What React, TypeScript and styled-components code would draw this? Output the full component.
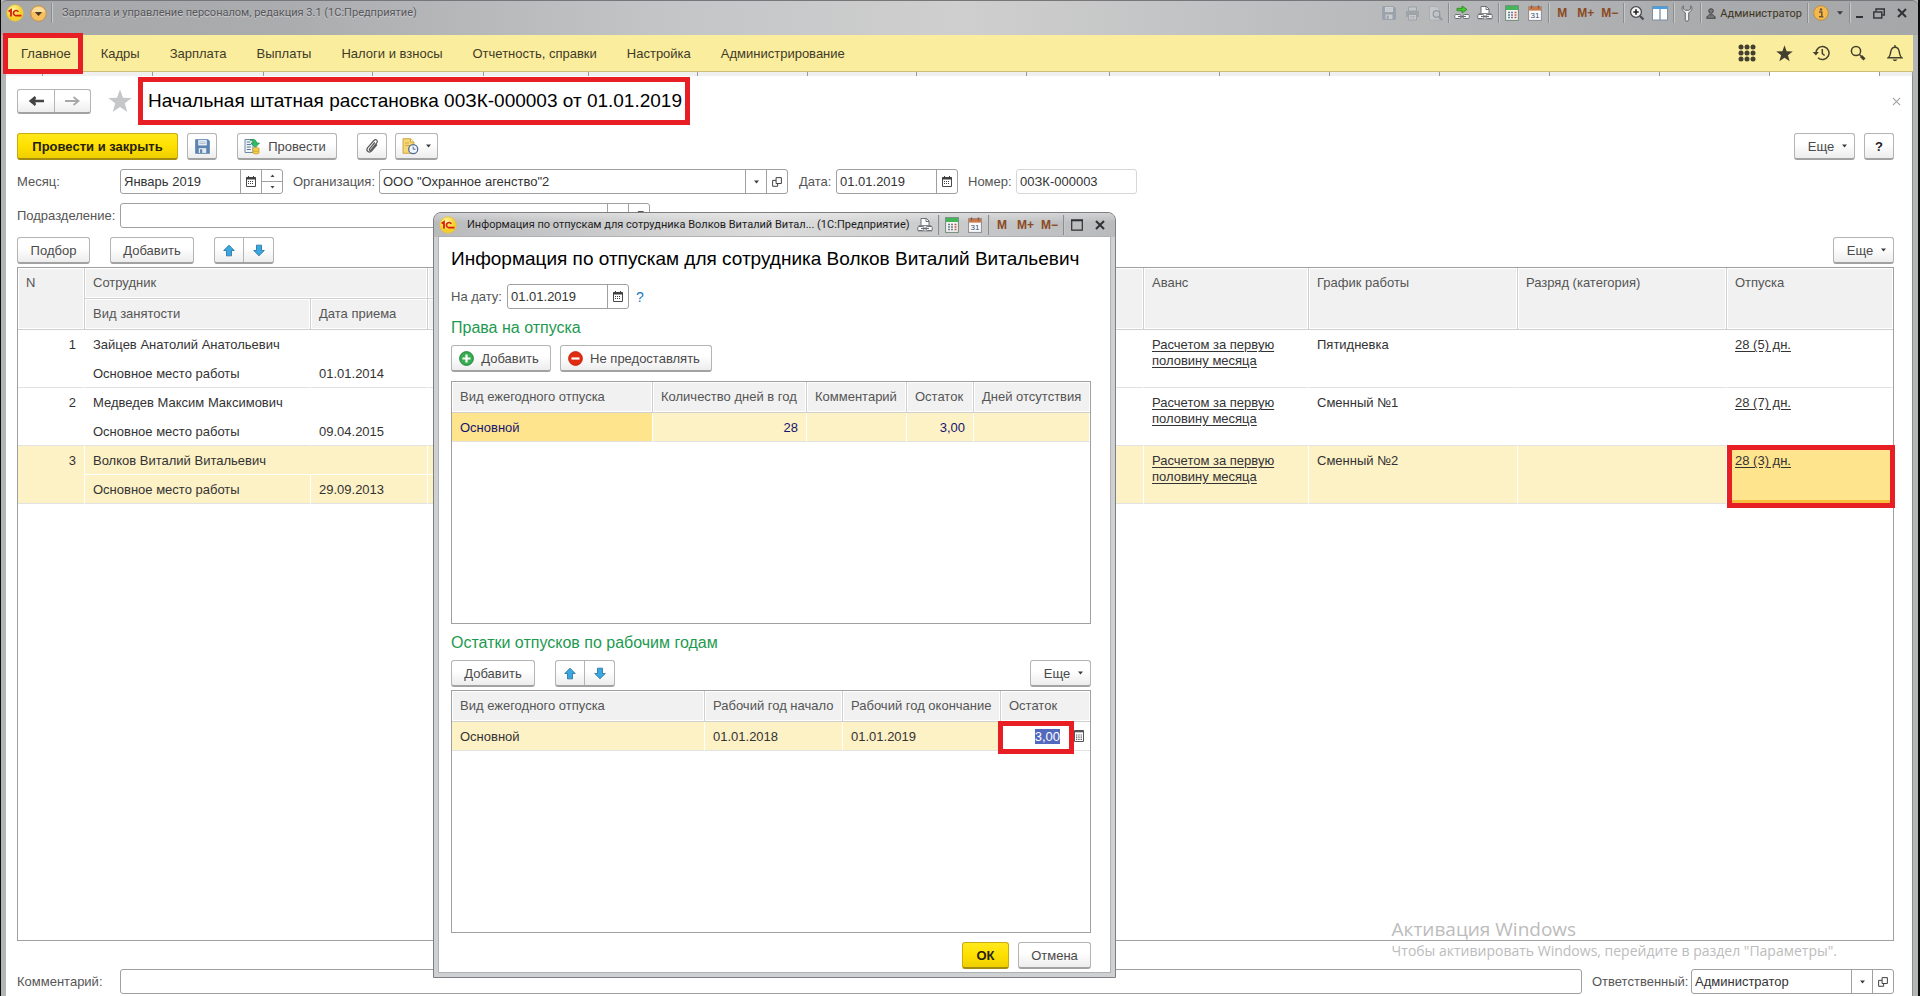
import React, { useEffect, useRef } from "react";
import styled, { createGlobalStyle, css } from "styled-components";

const RED = "#e81e25";
const LINE = "#a0a0a0";

const GlobalStyle = createGlobalStyle`
  *, *::before, *::after { box-sizing: border-box; }
  body { margin: 0; background: #000; }
  body, button, input { font-family: "Liberation Sans", Arial, sans-serif; font-size: 13px; color: #333; }
  h1, h2, h3, p { margin: 0; font-weight: normal; }
  button { cursor: pointer; }
`;

/* ---------- window frame ---------- */

const Frame = styled.div`
  position: relative;
  display: flex;
  flex-direction: column;
  min-height: 100vh;
  padding: 0 5px;
  background: #b4b5b7;
  border: solid #0c0c0c;
  border-width: 0 2px 0 1px;
`;

const TitleBar = styled.header`
  display: flex;
  align-items: flex-start;
  height: 35px;
  margin: 0 -5px;
  padding: 1px 8px 0 5px;
  border-top: 1px solid #77777b;
  border-radius: 6px 6px 0 0;
  background: linear-gradient(90deg, #a6a7a9 0%, #abacae 15%, #c4c5c7 35%, #cfcfcf 50%, #bcbdbf 68%, #a9aaac 90%, #a6a7a9 100%);
`;

const BarGroup = styled.div<{ $gap: number }>`
  display: flex;
  align-items: center;
  gap: ${(p) => p.$gap}px;
  height: 22px;
`;

const Separator = styled.span`
  width: 1px;
  height: 20px;
  margin: 0 -2px;
  background: #8c8d90;
  box-shadow: 1px 0 0 #c6c7c9;
`;

const WindowTitle = styled.span<{ $strong?: boolean }>`
  flex: 1;
  margin-left: ${(p) => (p.$strong ? 10 : 12)}px;
  font-family: Roboto, "Liberation Sans", sans-serif;
  font-size: 11px;
  line-height: 22px;
  white-space: pre;
  color: ${(p) => (p.$strong ? "#1c1c1c" : "#55565a")};
  text-shadow: 0 1px 1px #d4d4d6;
`;

const BarButton = styled.button<{ $faded?: boolean; $narrow?: boolean }>`
  display: flex;
  align-items: center;
  justify-content: center;
  gap: 4px;
  min-width: ${(p) => (p.$narrow ? 8 : 16)}px;
  height: 20px;
  padding: 0;
  border: 0;
  background: none;
  font-family: Roboto, "Liberation Sans", sans-serif;
  font-size: 11px;
  white-space: nowrap;
  color: #3c3420;
  opacity: ${(p) => (p.$faded ? 0.4 : 1)};
`;

const Memory = styled(BarButton)`
  font-family: "Liberation Sans", Arial, sans-serif;
  font-size: 12px;
  font-weight: bold;
  color: #8a4a22;
`;

/* ---------- section menu ---------- */

const MenuBar = styled.nav`
  display: flex;
  align-items: center;
  justify-content: space-between;
  height: 37px;
  padding: 0 7px 0 15px;
  background: #fbed9e;
  border-bottom: 1px solid #c9bd78;
`;

const MenuItems = styled.div`
  display: flex;
  gap: 30px;
`;

const MenuLink = styled.a<{ $marked?: boolean }>`
  line-height: 15px;
  color: #3f3b28;
  text-decoration: none;
  ${(p) =>
    p.$marked &&
    css`
      position: relative;
      &::after {
        content: "";
        position: absolute;
        inset: -13px -12px -13px -18px;
        border: 5px solid ${RED};
        pointer-events: none;
      }
    `}
`;

const MenuTools = styled.div`
  display: flex;
  gap: 15px;
`;

const ToolButton = styled.button`
  display: flex;
  align-items: center;
  justify-content: center;
  width: 22px;
  height: 22px;
  padding: 0;
  border: 0;
  background: none;
  color: #44402f;
`;

const TabStrip = styled.div`
  display: flex;
  height: 4px;
  background: #f0f0f0;
`;

const Tab = styled.span<{ $size: number; $active?: boolean }>`
  flex: ${(p) => p.$size} 1 0;
  border-right: 1px solid #9a9a9a;
  background: ${(p) => (p.$active ? "#fff" : "#f0f0f0")};
`;

/* ---------- form ---------- */

const Page = styled.main`
  flex: 1;
  display: flex;
  flex-direction: column;
  padding: 1px 18px 2px 11px;
  background: #fff;
  border-right: 1px solid #8c8c8c;
`;

const Row = styled.div<{ $top?: number; $gap?: number }>`
  display: flex;
  align-items: center;
  gap: ${(p) => p.$gap ?? 0}px;
  margin-top: ${(p) => p.$top ?? 9}px;
`;

const Spacer = styled.span`
  flex: 1;
`;

const PageTitle = styled.h1`
  height: 48px;
  margin-left: 6px;
  padding: 0 3px 0 5px;
  border: 5px solid ${RED};
  font-size: 19px;
  line-height: 38px;
  color: #000;
  white-space: nowrap;
`;

const StarToggle = styled(ToolButton)`
  width: 24px;
  margin-left: 17px;
  color: #c6c7c9;
`;

const CloseTab = styled(ToolButton)`
  margin-right: -13px;
  color: #a8a8a8;
`;

const Button = styled.button<{ $w?: number; $primary?: boolean; $left?: number; $bold?: boolean; $icon?: boolean; $more?: boolean }>`
  display: inline-flex;
  align-items: center;
  justify-content: center;
  gap: ${(p) => (p.$more ? 8 : 7)}px;
  width: ${(p) => (p.$w ? p.$w + "px" : "auto")};
  height: 27px;
  margin-left: ${(p) => p.$left ?? 0}px;
  padding: ${(p) => (p.$icon ? "0 4px 0 0" : p.$more ? "0 0 0 6px" : "0")};
  border: 1px solid #b4b4b4;
  border-bottom: 2px solid #a2a2a2;
  border-radius: 3px;
  background: linear-gradient(#fff 40%, #ededed);
  color: #4a4a4a;
  white-space: nowrap;
  ${(p) =>
    p.$bold &&
    css`
      font-weight: bold;
      color: #222;
    `}
  ${(p) =>
    p.$primary &&
    css`
      font-weight: bold;
      color: #26220a;
      border-color: #c8ac12;
      border-bottom-color: #a38c10;
      background: linear-gradient(#ffe81c, #ffe000 50%, #efcf00);
    `}
`;

const Pair = styled.span<{ $h: number; $left?: number }>`
  display: inline-flex;
  height: ${(p) => p.$h}px;
  margin-left: ${(p) => p.$left ?? 0}px;
  border: 1px solid #b4b4b4;
  border-bottom: 2px solid #a2a2a2;
  border-radius: 3px;
  background: linear-gradient(#fff 40%, #ededed);
`;

const PairButton = styled.button<{ $w: number }>`
  display: flex;
  align-items: center;
  justify-content: center;
  width: ${(p) => p.$w}px;
  padding: 0;
  border: 0;
  background: none;
  & + & {
    border-left: 1px solid #b4b4b4;
  }
`;

const Label = styled.label<{ $w?: number; $left?: number }>`
  flex: none;
  width: ${(p) => (p.$w ? p.$w + "px" : "auto")};
  margin-left: ${(p) => p.$left ?? 0}px;
  color: #555;
  white-space: nowrap;
`;

const Field = styled.span<{ $w?: number; $light?: boolean }>`
  display: flex;
  flex: ${(p) => (p.$w ? "none" : "1")};
  width: ${(p) => (p.$w ? p.$w + "px" : "auto")};
  height: 25px;
  border: 1px solid ${(p) => (p.$light ? "#d6d6d6" : LINE)};
  border-radius: 3px;
  background: #fff;
`;

const Input = styled.input`
  flex: 1;
  min-width: 0;
  padding: 0 0 0 3px;
  border: 0;
  outline: 0;
  background: none;
  color: #333;
`;

const FieldButton = styled.button`
  display: flex;
  align-items: center;
  justify-content: center;
  width: 21px;
  padding: 0;
  border: 0;
  border-left: 1px solid ${LINE};
  background: none;
  color: #444;
`;

const Stepper = styled.span`
  display: flex;
  flex-direction: column;
  width: 21px;
  border-left: 1px solid ${LINE};
`;

const StepButton = styled.button`
  display: flex;
  flex: 1;
  align-items: center;
  justify-content: center;
  padding: 0;
  border: 0;
  background: none;
  color: #444;
  & + & {
    border-top: 1px solid ${LINE};
  }
`;

/* ---------- tables ---------- */

const GridBox = styled.div<{ $top: number; $h?: number }>`
  flex: ${(p) => (p.$h ? "none" : "1")};
  height: ${(p) => (p.$h ? p.$h + "px" : "auto")};
  margin-top: ${(p) => p.$top}px;
  border: 1px solid ${LINE};
  background: #fff;
`;

const Grid = styled.table`
  width: 100%;
  table-layout: fixed;
  border-collapse: separate;
  border-spacing: 0;
`;

const Col = styled.col<{ $w?: number }>`
  width: ${(p) => (p.$w ? p.$w + "px" : "auto")};
`;

const Th = styled.th`
  height: 31px;
  padding: 7px 8px;
  border: solid #cfcfcf;
  border-width: 0 1px 1px 0;
  background: #f1f1f1;
  box-shadow: inset 0 0 0 1px #fff;
  font-weight: normal;
  line-height: 15px;
  text-align: left;
  vertical-align: top;
  white-space: nowrap;
  color: #555;
  &:last-child {
    border-right: 0;
  }
`;

const tone = { plain: "#fff", selected: "#fdf1c6", current: "#ffe48e" };

const Td = styled.td<{ $tone?: keyof typeof tone; $right?: boolean; $ink?: string; $line?: boolean; $mark?: boolean }>`
  height: 29px;
  padding: 7px 8px 5px;
  border: solid transparent;
  border-width: 0 1px 1px 0;
  border-right-color: #fff;
  border-bottom-color: ${(p) => (p.$line ? "#e2e2e2" : "#fff")};
  background: ${(p) => tone[p.$tone ?? "plain"]};
  line-height: 16px;
  text-align: ${(p) => (p.$right ? "right" : "left")};
  vertical-align: top;
  color: ${(p) => p.$ink ?? "#333"};
  ${(p) =>
    p.$mark &&
    css`
      position: relative;
      box-shadow: inset 0 -3px 0 #f7bd3a;
      &::after {
        content: "";
        position: absolute;
        inset: -1px -3px -5px 0;
        border: 5px solid ${RED};
        pointer-events: none;
      }
    `}
`;

const CellLink = styled.a`
  color: inherit;
  text-underline-offset: 2px;
  white-space: pre-line;
`;

const EditCell = styled.td`
  position: relative;
  padding: 0;
  background: #fff;
  border-bottom: 1px solid #e2e2e2;
  &::after {
    content: "";
    position: absolute;
    inset: -1px 16px -4px -3px;
    border: 5px solid ${RED};
    pointer-events: none;
  }
`;

const EditRow = styled.span`
  display: flex;
  align-items: center;
  height: 28px;
`;

const EditInput = styled.input`
  width: 59px;
  padding: 0;
  border: 0;
  outline: 0;
  background: none;
  text-align: right;
  &::selection {
    background: #5269bd;
    color: #fff;
  }
`;

const EditButton = styled(ToolButton)`
  width: 12px;
  margin-left: 13px;
`;

/* ---------- dialog ---------- */

const Dialog = styled.section`
  position: absolute;
  left: 432px;
  top: 212px;
  width: 683px;
  padding: 0 5px 5px;
  border: 1px solid #7e7f82;
  border-radius: 8px 8px 0 0;
  background: #cfd0d1;
`;

const DialogBar = styled.header`
  display: flex;
  align-items: center;
  height: 24px;
  margin: 0 -5px;
  padding: 0 7px 0 5px;
  border-radius: 7px 7px 0 0;
  background: linear-gradient(rgba(255, 255, 255, 0.35), rgba(255, 255, 255, 0) 40%),
    linear-gradient(90deg, #b9babc, #dcdcdc 50%, #b9babc);
`;

const DialogBody = styled.div`
  padding: 11px 19px 3px 12px;
  background: #fff;
  box-shadow: 0 0 0 1px #b0b1b3;
`;

const DialogTitle = styled.h2`
  font-size: 19px;
  line-height: 22px;
  color: #000;
  white-space: nowrap;
`;

const SectionTitle = styled.h3`
  margin-top: 9px;
  font-size: 16px;
  line-height: 20px;
  color: #1d9a50;
`;

const Hint = styled.a`
  margin-left: 7px;
  font-size: 14px;
  color: #1a7ab8;
  text-decoration: none;
`;

/* ---------- desktop watermark ---------- */

const Watermark = styled.aside`
  position: absolute;
  right: 81px;
  bottom: 34px;
  font-family: "Open Sans", "Noto Sans", sans-serif;
  font-size: 14px;
  line-height: 22px;
  color: #bcbcbc;
  white-space: nowrap;
  pointer-events: none;
`;

const WatermarkTitle = styled.p`
  font-size: 19px;
`;

/* ---------- icons ---------- */

const Logo = () => (
  <svg width="18" height="18" viewBox="0 0 18 18">
    <defs>
      <radialGradient id="logo" cx="40%" cy="30%">
        <stop offset="0" stopColor="#fff7a0" />
        <stop offset="1" stopColor="#f6cf2c" />
      </radialGradient>
    </defs>
    <circle cx="9" cy="9" r="8.3" fill="url(#logo)" stroke="#e3bd3a" strokeWidth=".6" />
    <path d="M2.600 7.600 5 6v6.600" fill="none" stroke="#d8200f" strokeWidth="1.800" />
    <path d="M12.300 7.800a2.600 2.600 0 1 0-2.500 3.900h5.700" fill="none" stroke="#d8200f" strokeWidth="1.700" />
  </svg>
);

const Orb = () => (
  <svg width="17" height="17" viewBox="0 0 17 17">
    <circle cx="8.500" cy="8.500" r="7.800" fill="#f6bf60" stroke="#b98a45" strokeWidth=".8" />
    <path d="M2 7a6.600 6.200 0 0 1 13 0z" fill="#fbdc9c" />
    <path d="M4.800 7h7.400l-3.700 4z" fill="#4c3820" />
  </svg>
);

const Floppy = ({ size = 14, tone: c = "#6d7f95", paper = "#c5ccd4" }) => (
  <svg width={size} height={size} viewBox="0 0 14 14">
    <path d="M.7.700h11.300L13.300 2v11.300H.7z" fill={c} stroke={c} />
    <path d="M3 1h8v5H3z" fill="#eef3f8" />
    <path d="M4 2.700h6M4 4.300h6" stroke={paper} strokeWidth=".8" />
    <path d="M3.500 8.500h7V13h-7z" fill="#e3e9ef" />
    <path d="M4.700 9.600h2V13h-2z" fill={c} />
  </svg>
);

const Printer = () => (
  <svg width="15" height="15" viewBox="0 0 15 15">
    <path d="M3.500 1h8v4h-8z" fill="#d5dade" stroke="#74808c" />
    <path d="M1 5h13v6H1z" fill="#7c8894" />
    <path d="M3.500 8.500h8v5.500h-8z" fill="#dfe3e6" stroke="#74808c" />
    <path d="M5 10.500h5M5 12h5" stroke="#9aa4ad" strokeWidth=".8" />
  </svg>
);

const Preview = () => (
  <svg width="15" height="15" viewBox="0 0 15 15">
    <path d="M1.500.500h7l3 3v10.500h-10z" fill="#dce0e4" stroke="#9aa3ac" />
    <circle cx="8.500" cy="8" r="3.300" fill="#cfd6dc" stroke="#5f6e7c" strokeWidth="1.300" />
    <path d="M11 10.500 14.200 14" stroke="#5f6e7c" strokeWidth="2" />
  </svg>
);

const Chain = () => (
  <g fill="#fff" stroke="#6b6e73" strokeWidth="1">
    <rect x=".8" y="9.500" width="6" height="4" rx="1" />
    <rect x="9.200" y="9.500" width="6" height="4" rx="1" />
    <path d="M4 11.500h8" strokeWidth="1.200" />
  </g>
);

const LinkArrow = () => (
  <svg width="16" height="16" viewBox="0 0 16 16">
    <Chain />
    <path d="M3 3.300h5V1l5 3.500-5 3.500V5.700H3z" fill="#49c931" stroke="#24801a" strokeWidth=".8" />
  </svg>
);

const LinkPage = () => (
  <svg width="16" height="16" viewBox="0 0 16 16">
    <path d="M4 9V1.500h5.500L12 4v5" fill="#fff" stroke="#6b6e73" />
    <path d="M9 1.500V4.500h3" fill="none" stroke="#6b6e73" />
    <path d="M2 8.500h12l1 5.500H1z" fill="#f1f2f3" stroke="#85888c" />
    <Chain />
  </svg>
);

const Calculator = () => (
  <svg width="14" height="16" viewBox="0 0 14 16">
    <rect x=".6" y=".6" width="12.800" height="14.800" fill="#f3f3f3" stroke="#6f8a78" />
    <rect x="1" y="1" width="12" height="4" fill="#46b458" />
    <path d="M3 7.500h2M6 7.500h2M3 10h2M6 10h2M3 12.500h2M6 12.500h2" stroke="#6c7f90" strokeWidth="1.400" />
    <path d="M9.500 7.500h2M9.500 10h2M9.500 12.500h2" stroke="#c25a4a" strokeWidth="1.400" />
  </svg>
);

const Calendar31 = () => (
  <svg width="14" height="16" viewBox="0 0 14 16">
    <rect x=".6" y="1.600" width="12.800" height="13.800" fill="#fbfbfb" stroke="#8b8b90" />
    <rect x="1" y="2" width="12" height="3.600" fill="#c9794a" />
    <path d="M3.500.500v3M10.500.500v3" stroke="#a0552c" strokeWidth="1.400" />
    <text x="7" y="13" textAnchor="middle" fontFamily="Liberation Sans" fontSize="8" fill="#334e6c">31</text>
  </svg>
);

const ZoomIn = () => (
  <svg width="16" height="16" viewBox="0 0 16 16">
    <circle cx="7" cy="7" r="5.400" fill="#f5f5f5" stroke="#4a4b4e" strokeWidth="1.300" />
    <path d="M4.300 7h5.400M7 4.300v5.400" stroke="#222" strokeWidth="1.600" />
    <path d="m11 11 3.500 3.500" stroke="#4a4b4e" strokeWidth="2.200" />
  </svg>
);

const Panels = () => (
  <svg width="16" height="15" viewBox="0 0 16 15">
    <path d="M.5.500h15v13.500H.5z" fill="#fff" stroke="#7a8ea3" />
    <path d="M.5.500h15v2.500H.5z" fill="#4c9ede" />
    <path d="M8 3v11" stroke="#7a8ea3" strokeWidth="1.300" />
  </svg>
);

const Wrench = () => (
  <svg width="12" height="17" viewBox="0 0 12 17">
    <path
      d="M2.300.800C.6 2 .5 5.500 3.300 6.800L4.300 8v6.500a1.700 1.700 0 0 0 3.400 0V8l1-1.200C11.500 5.500 11.400 2 9.700.800V4L7.800 5.300H4.200L2.300 4z"
      fill="#f3f3f3"
      stroke="#58595c"
      strokeWidth=".9"
    />
  </svg>
);

const Person = () => (
  <svg width="10" height="11" viewBox="0 0 10 11">
    <circle cx="5" cy="3" r="2.300" fill="#77787a" stroke="#3d3d3d" strokeWidth=".9" />
    <path d="M.7 10.300c0-2 1.500-3 2.800-3.600h3c1.300.6 2.800 1.600 2.800 3.600z" fill="#77787a" stroke="#3d3d3d" strokeWidth=".9" />
  </svg>
);

const Info = () => (
  <svg width="16" height="16" viewBox="0 0 16 16">
    <circle cx="8" cy="8" r="7.300" fill="#f5b94c" stroke="#b98e48" />
    <circle cx="8" cy="4.500" r="1.300" fill="#6b5838" />
    <path d="M6 7h2.800v4.500M6 11.800h4.300" fill="none" stroke="#6b5838" strokeWidth="1.500" />
  </svg>
);

const Caret = ({ w = 5 }) => (
  <svg width={w} height="4" viewBox="0 0 6 4">
    <path d="M0 .3h6L3 3.800z" fill="#3c3c3c" />
  </svg>
);

const Minimize = () => (
  <svg width="9" height="12" viewBox="0 0 9 12">
    <path d="M1 10h7" stroke="#303134" strokeWidth="2" />
  </svg>
);

const Restore = () => (
  <svg width="12" height="11" viewBox="0 0 12 11">
    <path d="M3 3.500V1h8.300v6H9.300" fill="none" stroke="#303134" strokeWidth="1.400" />
    <rect x=".8" y="4" width="8" height="6" fill="none" stroke="#303134" strokeWidth="1.400" />
  </svg>
);

const Maximize = () => (
  <svg width="12" height="12" viewBox="0 0 12 12">
    <path d="M.7 1.300h10.600v9.900H.7z" fill="none" stroke="#303134" strokeWidth="1.200" />
    <path d="M0 1.300h12" stroke="#303134" strokeWidth="2" />
  </svg>
);

const Cross = ({ size = 10, color = "#303134", weight = 2 }) => (
  <svg width={size} height={size} viewBox="0 0 10 10">
    <path d="m1 1 8 8M9 1 1 9" stroke={color} strokeWidth={weight} />
  </svg>
);

const Dots = () => (
  <svg width="18" height="18" viewBox="0 0 18 18" fill="currentColor">
    {[3, 9, 15].map((y) => [3, 9, 15].map((x) => <circle key={`${x}${y}`} cx={x} cy={y} r="2.500" />))}
  </svg>
);

const Star = ({ size = 17 }) => (
  <svg width={size} height={size} viewBox="0 0 24 24" fill="currentColor">
    <path d="m12 .5 3 8.200 8.700.3-6.900 5.300 2.500 8.700L12 18l-7.300 5 2.500-8.700L.3 9l8.700-.3z" />
  </svg>
);

const History = () => (
  <svg width="18" height="16" viewBox="0 0 18 16" fill="none" stroke="currentColor" strokeWidth="1.500">
    <path d="M4 8a6.500 6.500 0 1 1 2 4.700" />
    <path d="M10.300 4v4.500l2.300 2" />
    <path d="M.7 7h6.200L3.900 10.500z" fill="currentColor" stroke="none" />
  </svg>
);

const Search = () => (
  <svg width="16" height="16" viewBox="0 0 16 16" fill="none" stroke="currentColor">
    <circle cx="6" cy="6" r="4.600" strokeWidth="1.500" />
    <path d="m9.500 9.500 1.500 1.500" strokeWidth="1.500" />
    <path d="m11 11 3.500 3.500" strokeWidth="3" />
  </svg>
);

const Bell = () => (
  <svg width="16" height="18" viewBox="0 0 16 18" fill="none" stroke="currentColor" strokeWidth="1.400">
    <path d="M1.200 13.700c2-1.500 2-3.200 2.500-5.700C4.200 5 5.500 3.300 8 3.300S11.800 5 12.300 8c.5 2.500.5 4.200 2.500 5.700z" />
    <path d="M8 3.300V1" />
    <path d="M5.500 15.500h5L9 17H7z" fill="currentColor" stroke="none" />
  </svg>
);

const Arrow = ({ flip = false, color = "#444" }) => (
  <svg width="15" height="12" viewBox="0 0 15 12">
    <path
      d={flip ? "M0 6h13M8.500 2 13.500 6 8.500 10" : "M15 6H4M6.500 2 1.500 6l5 4"}
      fill={color}
      stroke={color}
      strokeWidth={flip ? 1.800 : 2.300}
      fillOpacity={flip ? 0 : 1}
    />
  </svg>
);

const BlueArrow = ({ down = false }) => (
  <svg width="12" height="13" viewBox="0 0 13 13">
    <path
      d={down ? "M6.500 12.300.8 6.500h3V.7h5.400v5.800h3z" : "M6.500.7.800 6.500h3v5.800h5.400V6.500h3z"}
      fill="#3aa8e0"
      stroke="#2a6f9e"
      strokeWidth=".9"
    />
  </svg>
);

const PostDoc = () => (
  <svg width="17" height="17" viewBox="0 0 17 17">
    <path d="M1 1.500h8v13H1z" fill="#eef3f8" stroke="#6e8aa3" />
    <path d="M2.800 4h3.500M2.800 6.500h4.500M2.800 9h4M2.800 11.500h4" stroke="#557b9c" />
    <path d="M6 2c4-1.500 6.500 0 6.500 3h3l-4.200 4.500L7 5h2.500c0-1.500-1.500-2.500-3.500-3z" fill="#2fc06a" stroke="#168544" strokeWidth=".7" />
    <path d="M9 10.500c0-1.300 6-1.300 6 0v4.500c0 1.300-6 1.300-6 0z" fill="#f2cf4a" stroke="#c79a22" strokeWidth=".7" />
    <path d="M9 12.700c1 1 5 1 6 0" fill="none" stroke="#c79a22" strokeWidth=".7" />
  </svg>
);

const Clip = () => (
  <svg width="14" height="16" viewBox="0 0 14 16" fill="none" stroke="#58595b" strokeWidth="1.200">
    <path d="M9.800 4.500 4.600 10.800c-.9 1.200.6 2.300 1.500 1.200l5.700-7c1.700-2.300-1-4.600-2.900-2.500L2.500 9.800c-2 2.800 1.600 6 4.200 3.100L12 6.500" />
  </svg>
);

const DocClock = () => (
  <svg width="17" height="17" viewBox="0 0 17 17">
    <path d="M1 .7h7.500L12 4v11.300H1z" fill="#f6d573" stroke="#c9a23c" strokeWidth=".9" />
    <path d="M8.500.700V4H12" fill="#fff2c0" stroke="#c9a23c" strokeWidth=".9" />
    <path d="M3 5h4M3 7.500h5" stroke="#d0ab4e" />
    <circle cx="11.200" cy="11.200" r="4.500" fill="#f2f6fb" stroke="#4f6a94" strokeWidth="1.300" />
    <path d="M11.200 8.500v2.700h2.300" fill="none" stroke="#4f6a94" />
  </svg>
);

const DayPicker = () => (
  <svg width="10" height="11" viewBox="0 0 10 11">
    <path d="M.5 1.500h9v9h-9z" fill="none" stroke="#4a4a4a" />
    <path d="M0 2.500h10" stroke="#3f3f3f" strokeWidth="2" />
    <path d="M2.500 0v2M7.500 0v2" stroke="#3f3f3f" />
    <path d="M2 5.500h6M2 7.500h6" stroke="#3f3f3f" strokeDasharray="1 1" />
  </svg>
);

const OpenRef = () => (
  <svg width="10" height="10" viewBox="0 0 11 11" fill="none" stroke="#3f3f3f" strokeWidth="1.100">
    <path d="M4.500.700h5.800v6.500H4.500z" />
    <path d="M4.500 3.700H.7v6.500h5.500V7.500" />
  </svg>
);

const MiniCalc = () => (
  <svg width="10" height="12" viewBox="0 0 10 12">
    <path d="M.5.500h9v11h-9z" fill="#fff" stroke="#555" />
    <path d="M0 1.500h10" stroke="#555" strokeWidth="1.600" />
    <path d="M2 5h6M2 7.200h6M2 9.400h6" stroke="#555" strokeWidth="1.200" strokeDasharray="1.300 1" />
  </svg>
);

const StepMark = ({ up = false }) => (
  <svg width="5" height="3" viewBox="0 0 5 3">
    <path d={up ? "M.5 3h4L2.500.5z" : "M.5 0h4L2.500 2.500z"} fill="#444" />
  </svg>
);

const Disc = ({ kind }: { kind: "plus" | "minus" }) => (
  <svg width="15" height="15" viewBox="0 0 15 15">
    <circle cx="7.500" cy="7.500" r="6.900" fill={kind === "plus" ? "#38ac50" : "#df2b10"} stroke={kind === "plus" ? "#20803a" : "#c8240c"} strokeWidth=".9" />
    <path d={kind === "plus" ? "M3.500 7.500h8M7.500 3.500v8" : "M3.500 7.500h8"} stroke="#fff" strokeWidth="2.200" />
  </svg>
);

/* ---------- data ---------- */

const sections = ["Главное", "Кадры", "Зарплата", "Выплаты", "Налоги и взносы", "Отчетность, справки", "Настройка", "Администрирование"];
const tabs = [36, 111, 111, 109, 111, 105, 109, 110, 110, 110, 83, 110, 110, 110, 110, 110, 110, 111, 32];
const employees = [
  { n: 1, name: "Зайцев Анатолий Анатольевич", date: "01.01.2014", plan: "Пятидневка", leave: "28 (5) дн." },
  { n: 2, name: "Медведев Максим Максимович", date: "09.04.2015", plan: "Сменный №1", leave: "28 (7) дн." },
  { n: 3, name: "Волков Виталий Витальевич", date: "29.09.2013", plan: "Сменный №2", leave: "28 (3) дн." },
];

const MoreButton = () => (
  <Button type="button" $w={61} $more>
    Еще
    <Caret />
  </Button>
);

const MovePair = ({ left }: { left: number }) => (
  <Pair $h={27} $left={left}>
    <PairButton type="button" $w={28} aria-label="Вверх"><BlueArrow /></PairButton>
    <PairButton type="button" $w={30} aria-label="Вниз"><BlueArrow down /></PairButton>
  </Pair>
);

const EmployeeTable = () => (
  <GridBox $top={3}>
    <Grid>
      <colgroup>
        {[67, 226, 117, 272, 0, 165, 209, 209, 166].map((w, i) => <Col key={i} $w={w || undefined} />)}
      </colgroup>
      <thead>
        <tr>
          <Th rowSpan={2}>N</Th>
          <Th colSpan={2}>Сотрудник</Th>
          <Th />
          <Th rowSpan={2} />
          <Th rowSpan={2}>Аванс</Th>
          <Th rowSpan={2}>График работы</Th>
          <Th rowSpan={2}>Разряд (категория)</Th>
          <Th rowSpan={2}>Отпуска</Th>
        </tr>
        <tr>
          <Th>Вид занятости</Th>
          <Th>Дата приема</Th>
          <Th />
        </tr>
      </thead>
      <tbody>
        {employees.map((e) => {
          const t = e.n === 3 ? "selected" : "plain";
          return (
            <React.Fragment key={e.n}>
              <tr>
                <Td rowSpan={2} $tone={t} $line $right>{e.n}</Td>
                <Td colSpan={2} $tone={t}>{e.name}</Td>
                <Td $tone={t} />
                <Td rowSpan={2} $tone={t} $line />
                <Td rowSpan={2} $tone={t} $line><CellLink href="#advance">{"Расчетом за первую \nполовину месяца"}</CellLink></Td>
                <Td rowSpan={2} $tone={t} $line>{e.plan}</Td>
                <Td rowSpan={2} $tone={t} $line />
                <Td rowSpan={2} $tone={e.n === 3 ? "current" : t} $line $mark={e.n === 3}><CellLink href="#leave">{e.leave}</CellLink></Td>
              </tr>
              <tr>
                <Td $tone={t} $line>Основное место работы</Td>
                <Td $tone={t} $line>{e.date}</Td>
                <Td $tone={t} $line />
              </tr>
            </React.Fragment>
          );
        })}
      </tbody>
    </Grid>
  </GridBox>
);

const LeaveDialog = () => {
  const balance = useRef<HTMLInputElement>(null);
  useEffect(() => {
    balance.current?.focus();
    balance.current?.select();
  }, []);
  return (
    <Dialog role="dialog" aria-labelledby="leave-title">
      <DialogBar>
        <Logo />
        <WindowTitle $strong>{"Информация по отпускам для сотрудника Волков Виталий Витал... (1С:Предприятие)"}</WindowTitle>
        <BarGroup $gap={7}>
          <BarButton aria-label="Ссылка"><LinkPage /></BarButton>
          <Separator />
          <BarButton aria-label="Калькулятор"><Calculator /></BarButton>
          <BarButton aria-label="Календарь"><Calendar31 /></BarButton>
          <Separator />
          <Memory>M</Memory>
          <Memory>M+</Memory>
          <Memory>M−</Memory>
          <Separator />
          <BarButton aria-label="Развернуть"><Maximize /></BarButton>
          <BarButton aria-label="Закрыть"><Cross /></BarButton>
        </BarGroup>
      </DialogBar>
      <DialogBody>
        <DialogTitle id="leave-title">Информация по отпускам для сотрудника Волков Виталий Витальевич</DialogTitle>
        <Row $top={14}>
          <Label htmlFor="on-date" $w={56}>На дату:</Label>
          <Field $w={122}>
            <Input id="on-date" defaultValue="01.01.2019" />
            <FieldButton type="button" aria-label="Выбрать дату"><DayPicker /></FieldButton>
          </Field>
          <Hint href="#help">?</Hint>
        </Row>
        <SectionTitle>Права на отпуска</SectionTitle>
        <Row $top={7} $gap={9}>
          <Button type="button" $w={100} $icon><Disc kind="plus" />Добавить</Button>
          <Button type="button" $w={152} $icon><Disc kind="minus" />Не предоставлять</Button>
        </Row>
        <GridBox $top={9} $h={243}>
          <Grid>
            <colgroup>
              {[201, 154, 100, 67, 0].map((w, i) => <Col key={i} $w={w || undefined} />)}
            </colgroup>
            <thead>
              <tr>
                <Th>Вид ежегодного отпуска</Th>
                <Th>Количество дней в год</Th>
                <Th>Комментарий</Th>
                <Th>Остаток</Th>
                <Th>Дней отсутствия</Th>
              </tr>
            </thead>
            <tbody>
              <tr>
                <Td $tone="current" $ink="#15156e" $line>Основной</Td>
                <Td $tone="selected" $ink="#15156e" $line $right>28</Td>
                <Td $tone="selected" $line />
                <Td $tone="selected" $ink="#15156e" $line $right>3,00</Td>
                <Td $tone="selected" $line />
              </tr>
            </tbody>
          </Grid>
        </GridBox>
        <SectionTitle>Остатки отпусков по рабочим годам</SectionTitle>
        <Row $top={7}>
          <Button type="button" $w={84}>Добавить</Button>
          <MovePair left={20} />
          <Spacer />
          <MoreButton />
        </Row>
        <GridBox $top={3} $h={243}>
          <Grid>
            <colgroup>
              {[253, 138, 158, 0].map((w, i) => <Col key={i} $w={w || undefined} />)}
            </colgroup>
            <thead>
              <tr>
                <Th>Вид ежегодного отпуска</Th>
                <Th>Рабочий год начало</Th>
                <Th>Рабочий год окончание</Th>
                <Th>Остаток</Th>
              </tr>
            </thead>
            <tbody>
              <tr>
                <Td $tone="selected" $line>Основной</Td>
                <Td $tone="selected" $line>01.01.2018</Td>
                <Td $tone="selected" $line>01.01.2019</Td>
                <EditCell>
                  <EditRow>
                    <EditInput ref={balance} aria-label="Остаток" defaultValue="3,00" />
                    <EditButton type="button" aria-label="Калькулятор"><MiniCalc /></EditButton>
                  </EditRow>
                </EditCell>
              </tr>
            </tbody>
          </Grid>
        </GridBox>
        <Row $gap={9}>
          <Spacer />
          <Button type="button" $w={47} $primary>ОК</Button>
          <Button type="button" $w={73}>Отмена</Button>
        </Row>
      </DialogBody>
    </Dialog>
  );
};

export default function App() {
  return (
    <>
      <GlobalStyle />
      <Frame>
        <TitleBar>
          <BarGroup $gap={6}>
            <Logo />
            <BarButton aria-label="Меню"><Orb /></BarButton>
            <Separator />
          </BarGroup>
          <WindowTitle>{"Зарплата и управление персоналом, редакция 3.1 (1С:Предприятие)"}</WindowTitle>
          <BarGroup $gap={7}>
            <BarButton $faded aria-label="Сохранить"><Floppy /></BarButton>
            <BarButton $faded aria-label="Печать"><Printer /></BarButton>
            <BarButton $faded aria-label="Просмотр"><Preview /></BarButton>
            <Separator />
            <BarButton aria-label="Перейти по ссылке"><LinkArrow /></BarButton>
            <BarButton aria-label="Ссылка"><LinkPage /></BarButton>
            <Separator />
            <BarButton aria-label="Калькулятор"><Calculator /></BarButton>
            <BarButton aria-label="Календарь"><Calendar31 /></BarButton>
            <Separator />
            <Memory>M</Memory>
            <Memory>M+</Memory>
            <Memory>M−</Memory>
            <Separator />
            <BarButton aria-label="Масштаб"><ZoomIn /></BarButton>
            <BarButton aria-label="Панели"><Panels /></BarButton>
            <Separator />
            <BarButton aria-label="Настройки"><Wrench /></BarButton>
            <Separator />
            <BarButton><Person />Администратор</BarButton>
            <Separator />
            <BarButton aria-label="Справка"><Info /></BarButton>
            <BarButton $narrow aria-label="Еще"><Caret w={8} /></BarButton>
            <Separator />
            <BarButton $narrow aria-label="Свернуть"><Minimize /></BarButton>
            <BarButton aria-label="Восстановить"><Restore /></BarButton>
            <BarButton aria-label="Закрыть"><Cross /></BarButton>
          </BarGroup>
        </TitleBar>
        <MenuBar>
          <MenuItems>
            {sections.map((s, i) => <MenuLink key={s} href="#section" $marked={i === 0}>{s}</MenuLink>)}
          </MenuItems>
          <MenuTools>
            <ToolButton aria-label="Функции"><Dots /></ToolButton>
            <ToolButton aria-label="Избранное"><Star /></ToolButton>
            <ToolButton aria-label="История"><History /></ToolButton>
            <ToolButton aria-label="Поиск"><Search /></ToolButton>
            <ToolButton aria-label="Оповещения"><Bell /></ToolButton>
          </MenuTools>
        </MenuBar>
        <TabStrip>
          {tabs.map((w, i) => <Tab key={i} $size={w} $active={i === 17} />)}
        </TabStrip>
        <Page>
          <Row $top={0}>
            <Pair $h={25}>
              <PairButton type="button" $w={36} aria-label="Назад"><Arrow /></PairButton>
              <PairButton type="button" $w={36} aria-label="Вперед"><Arrow flip color="#a8a8a8" /></PairButton>
            </Pair>
            <StarToggle aria-label="В избранное"><Star size={24} /></StarToggle>
            <PageTitle>Начальная штатная расстановка 00ЗК-000003 от 01.01.2019</PageTitle>
            <Spacer />
            <CloseTab aria-label="Закрыть"><Cross size={9} color="#a0a0a0" weight={1.2} /></CloseTab>
          </Row>
          <Row $top={8}>
            <Button type="button" $w={161} $primary>Провести и закрыть</Button>
            <Button type="button" $w={30} $left={9} aria-label="Записать"><Floppy size={15} tone="#5b84b0" paper="#9db4ca" /></Button>
            <Button type="button" $w={100} $left={20} $icon><PostDoc />Провести</Button>
            <Button type="button" $w={30} $left={20} aria-label="Файлы"><Clip /></Button>
            <Button type="button" $w={43} $left={8} aria-label="Создать на основании"><DocClock /><Caret /></Button>
            <Spacer />
            <MoreButton />
            <Button type="button" $w={30} $left={9} $bold>?</Button>
          </Row>
          <Row>
            <Label htmlFor="month" $w={103}>Месяц:</Label>
            <Field $w={163}>
              <Input id="month" defaultValue="Январь 2019" />
              <FieldButton type="button" aria-label="Выбрать месяц"><DayPicker /></FieldButton>
              <Stepper>
                <StepButton type="button" aria-label="Больше"><StepMark up /></StepButton>
                <StepButton type="button" aria-label="Меньше"><StepMark /></StepButton>
              </Stepper>
            </Field>
            <Label htmlFor="org" $w={86} $left={10}>Организация:</Label>
            <Field $w={409}>
              <Input id="org" defaultValue={'ООО "Охранное агенство"2'} />
              <FieldButton type="button" aria-label="Выбрать"><Caret /></FieldButton>
              <FieldButton type="button" aria-label="Открыть"><OpenRef /></FieldButton>
            </Field>
            <Label htmlFor="date" $w={37} $left={11}>Дата:</Label>
            <Field $w={122}>
              <Input id="date" defaultValue="01.01.2019" />
              <FieldButton type="button" aria-label="Выбрать дату"><DayPicker /></FieldButton>
            </Field>
            <Label htmlFor="number" $w={48} $left={10}>Номер:</Label>
            <Field $w={121} $light>
              <Input id="number" defaultValue="00ЗК-000003" />
            </Field>
          </Row>
          <Row>
            <Label htmlFor="dept" $w={103}>Подразделение:</Label>
            <Field $w={530}>
              <Input id="dept" />
              <FieldButton type="button" aria-label="Выбрать"><Caret /></FieldButton>
              <FieldButton type="button" aria-label="Открыть"><OpenRef /></FieldButton>
            </Field>
          </Row>
          <Row>
            <Button type="button" $w={73}>Подбор</Button>
            <Button type="button" $w={84} $left={20}>Добавить</Button>
            <MovePair left={20} />
            <Spacer />
            <MoreButton />
          </Row>
          <EmployeeTable />
          <Row $top={28}>
            <Label htmlFor="comment" $w={103}>Комментарий:</Label>
            <Field><Input id="comment" /></Field>
            <Label htmlFor="owner" $w={99} $left={10}>Ответственный:</Label>
            <Field $w={203}>
              <Input id="owner" defaultValue="Администратор" />
              <FieldButton type="button" aria-label="Выбрать"><Caret /></FieldButton>
              <FieldButton type="button" aria-label="Открыть"><OpenRef /></FieldButton>
            </Field>
          </Row>
        </Page>
        <LeaveDialog />
        <Watermark>
          <WatermarkTitle>Активация Windows</WatermarkTitle>
          <p>Чтобы активировать Windows, перейдите в раздел "Параметры".</p>
        </Watermark>
      </Frame>
    </>
  );
}
